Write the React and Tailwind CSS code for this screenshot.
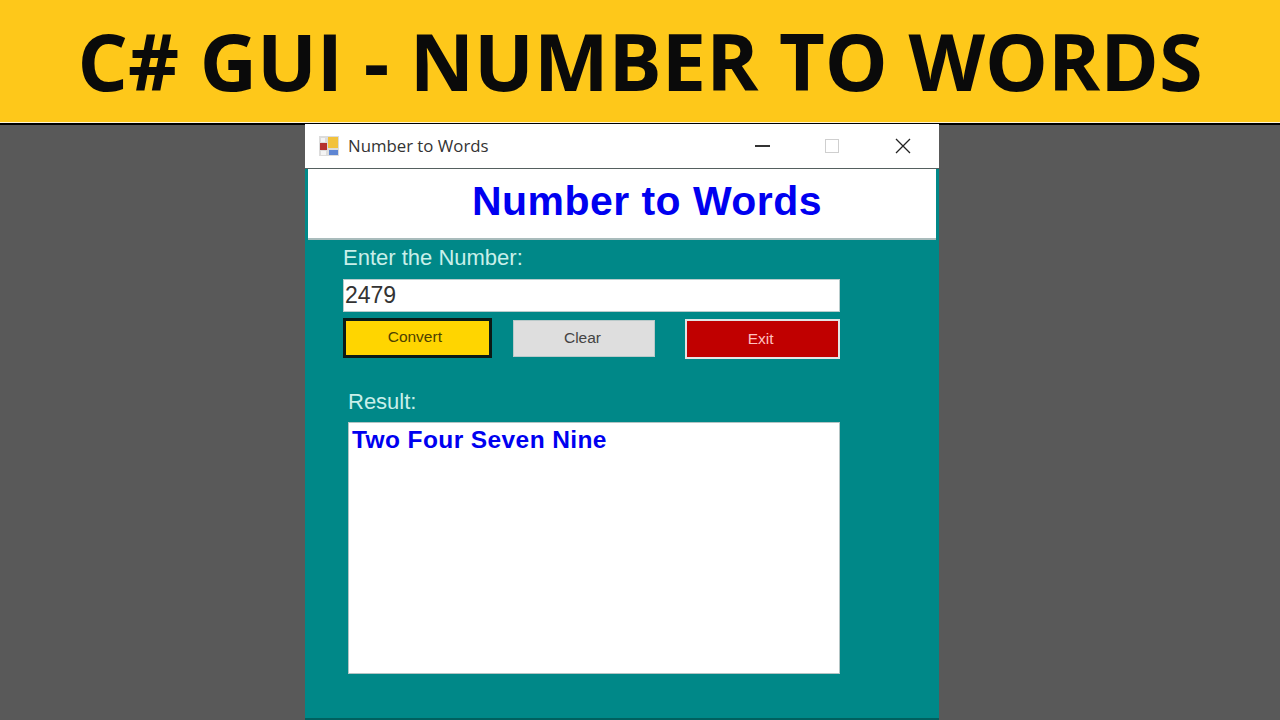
import React from "react";

const sans = "font-['Liberation_Sans',Arial,sans-serif]";

const App = () => {
  return (
    <div className="w-[1280px] h-[720px] overflow-hidden bg-[#595959] flex flex-col">
      <div className="h-[122px] shrink-0 bg-[#fec81a] flex items-center justify-center">
        <h1 className="font-['Open_Sans',sans-serif] font-bold text-[79.2px] leading-none text-[#0a0a0a] whitespace-nowrap">
          C# GUI - NUMBER TO WORDS
        </h1>
      </div>
      <div className="h-[1px] shrink-0 bg-[#fff6d8]" />
      <div className="h-[2px] shrink-0 bg-black" />

      <div className="-mt-[1px] ml-[305px] w-[634px] h-[596px] shrink-0 relative flex flex-col bg-[#008888] border-b-2 border-[#00605f]">
        {/* title bar */}
        <div className="h-[45px] shrink-0 bg-white border-b border-[#55605f] flex items-center pl-[13px]">
          <svg width="22" height="22" viewBox="0 0 22 22">
            <rect x="1" y="1" width="20" height="20" fill="#dcdcdc" />
            <rect x="3" y="3" width="4" height="4" fill="#f4f4f4" />
            <rect x="2" y="8" width="7" height="7" fill="#b5322e" />
            <rect x="3" y="16" width="5" height="4" fill="#f4f4f4" />
            <rect x="10" y="2" width="10" height="11" fill="#f2c23d" />
            <rect x="11" y="15" width="9" height="5" fill="#5f86d3" />
          </svg>
          <span className="ml-[8px] font-['Open_Sans',sans-serif] text-[16.8px] text-[#333]">Number to Words</span>
          <div className="ml-auto flex items-center pr-[28px]">
            <div className="w-[15px] h-[2px] bg-[#333]" />
            <div className="ml-[55px] w-[14px] h-[14px] border border-[#cfcfcf]" />
            <svg className="ml-[56px]" width="16" height="16" viewBox="0 0 16 16" fill="none" stroke="#222" strokeWidth="1.3">
              <path d="M1 1 15 15M15 1 1 15" />
            </svg>
          </div>
        </div>

        {/* header panel */}
        <div className="mx-[3px] h-[71px] shrink-0 bg-white border-b-2 border-[#a9bcbc] pl-[164px] pt-[8px]">
          <span className={`${sans} font-bold text-[41px] tracking-[0.45px] leading-[48px] text-[#0000f0]`}>
            Number to Words
          </span>
        </div>

        {/* form */}
        <div className={`${sans} flex flex-col pl-[38px]`}>
          <label className="mt-[5px] h-[26px] text-[22px] leading-[26px] text-[#c9efe9]">Enter the Number:</label>
          <div className="mt-[8px] w-[497px] h-[33px] bg-white border border-[#b9cccc] pl-[1px] text-[23px] leading-[31px] text-[#333]">
            2479
          </div>
          <div className="mt-[6px] w-[497px] h-[41px] flex items-start text-[15.5px]">
            <button className="w-[149px] h-[40px] pr-[5px] pb-[2px] bg-[#ffd500] border-[3px] border-[#0b1a16] text-[#4d4000]">Convert</button>
            <button className="mt-[2px] ml-[21px] w-[143px] h-[37px] pr-[3px] pb-[2px] bg-[#dedede] border border-[#b9c9c9] text-[#444]">Clear</button>
            <button className="mt-[1px] ml-[30px] w-[155px] h-[40px] pr-[4px] bg-[#c00000] border-2 border-[#e4e4e4] text-[#ffc0c0]">Exit</button>
          </div>
          <label className="mt-[30px] ml-[5px] h-[26px] text-[22px] leading-[26px] text-[#c9efe9]">Result:</label>
          <div className="mt-[7px] ml-[5px] w-[492px] h-[252px] bg-white border border-[#b3c4c4] pl-[3px] pt-[2px] text-[24.5px] tracking-[0.4px] leading-[30px] font-bold text-[#0000f0]">
            Two Four Seven Nine
          </div>
        </div>
      </div>
    </div>
  );
};

export default App;
